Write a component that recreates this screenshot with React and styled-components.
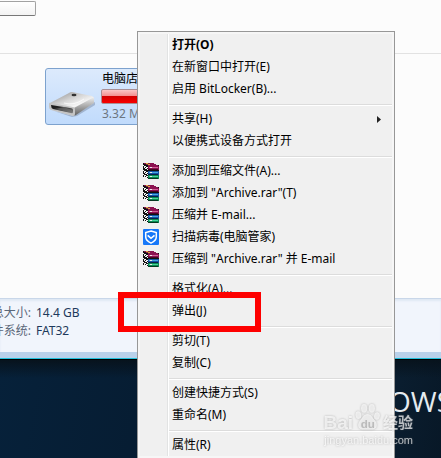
import React from 'react'
import styled, { createGlobalStyle } from 'styled-components'

const GlobalStyle = createGlobalStyle`
  * {
    box-sizing: border-box;
  }

  body {
    margin: 0;
    font-family: "Noto Sans", "Noto Sans CJK SC", sans-serif;
    font-size: 12px;
    color: #000;
  }
`;

const Screen = styled.div`
  position: relative;
  display: flex;
  flex-direction: column;
  min-height: 100vh;
  overflow: hidden;
  background: #fcfcfc;
`;

const Explorer = styled.main`
  border-bottom: 1px solid #22c0dc;
`;

const DriveGroup = styled.section`
  height: 54px;
  padding-top: 1px;
  border-bottom: 1px solid #e2e2e2;
`;

const EmptyBar = styled.div`
  width: 36px;
  height: 15px;
  border: 1px solid #a2a2a2;
  border-left: 0;
  border-bottom-color: #777;
  border-radius: 0 2px 2px 0;
  background: linear-gradient(#fff, #f3f3f3);
`;

const RemovableGroup = styled.section`
  padding: 14px 45px 173px;
`;

const DriveTile = styled.div`
  display: flex;
  align-items: center;
  width: 240px;
  height: 57px;
  padding: 0 4px 0 3px;
  gap: 5px;
  border: 1px solid #7da2ce;
  border-radius: 3px;
  background: linear-gradient(#dceafc, #c1dbfc);
`;

const DriveInfo = styled.div`
  flex: 1;
  display: flex;
  flex-direction: column;
`;

const DriveName = styled.span`
  line-height: 18px;
  padding-left: 1px;
`;

const UsageBar = styled.div`
  height: 15px;
  margin: 1px 0;
  border: 1px solid #aa8f94;
  border-radius: 2px;
  background: linear-gradient(#fbc6c6 0, #f38f8f 6px, #d00000 6px, #f80000 100%);
`;

const FreeSpace = styled.span`
  line-height: 18px;
  padding-left: 1px;
  color: #6d7580;
`;

const Details = styled.dl`
  margin: 0;
  padding: 5px 0 12px;
  border-top: 1px solid #c9d7e9;
  background: #f1f5fc;
  box-shadow: inset 0 2px 2px #dfe8f4;
`;

const DetailRow = styled.div`
  display: flex;
  gap: 5px;
  line-height: 18px;
`;

const DetailLabel = styled.dt`
  display: flex;
  justify-content: flex-end;
  width: 31px;
  overflow: hidden;
  white-space: nowrap;
  color: #5a6779;
`;

const DetailValue = styled.dd`
  margin: 0;
  color: #1e395b;
`;

const WindowEdge = styled.div`
  height: 6px;
  background: #b9d1ea;
`;

const Desktop = styled.footer`
  flex: 1;
  display: flex;
  justify-content: flex-end;
  overflow: hidden;
  border-top: 1px solid #000;
  background: linear-gradient(#07131d 0, transparent 18px),
    linear-gradient(100deg, #06213a 0, #061c31 40%, #0c2338 75%, #081827 100%);
`;

const Wallmark = styled.span`
  margin: 21px -11px 0 0;
  font-family: "Open Sans", sans-serif;
  font-size: 28px;
  line-height: 40px;
  color: #e6ebef;
`;

const ContextMenu = styled.div`
  position: absolute;
  top: 31px;
  left: 137px;
  width: 258px;
  padding: 2px;
  border: 1px solid #979797;
  background: linear-gradient(90deg, transparent 27px, #e2e3e3 27px, #e2e3e3 28px, #fff 28px, #fff 29px, transparent 29px) content-box,
    linear-gradient(#f0f0f0, #f0f0f0) content-box,
    #f6f6f6;
`;

const MenuItem = styled.button`
  position: relative;
  z-index: ${props => props.$raised ? 1 : 0};
  display: flex;
  align-items: center;
  width: 100%;
  height: 22px;
  padding: 0 11px 0 3px;
  border: 0;
  background: none;
  font: inherit;
  font-weight: ${props => props.$bold ? 700 : 400};
  color: #000;
  text-align: left;
  white-space: nowrap;
`;

const IconSlot = styled.span`
  display: flex;
  width: 16px;
  margin-right: 13px;
`;

const ItemLabel = styled.span`
  flex: 1;
  padding-bottom: 2px;
`;

const Separator = styled.div`
  height: 2px;
  margin: 4px 0 2px 29px;
  border-top: 1px solid #dcdcdc;
  border-bottom: 1px solid #fff;
`;

const Highlight = styled.span`
  position: absolute;
  top: -8px;
  left: -22px;
  width: 143px;
  height: 40px;
  border: 6px solid #fe0000;
  pointer-events: none;
`;

const Watermark = styled.div`
  position: absolute;
  right: 28px;
  bottom: 11px;
  z-index: 2;
  display: flex;
  flex-direction: column;
  align-items: flex-end;
  color: rgba(255, 255, 255, 0.7);
  filter: drop-shadow(0 0 1px rgba(90, 90, 90, 0.55));
  pointer-events: none;
`;

const WatermarkLogo = styled.div`
  display: flex;
  align-items: flex-end;
  font-family: "Liberation Sans", "Noto Sans CJK SC", sans-serif;
  font-size: 19px;
  font-weight: 700;
  line-height: 20px;
`;

const Paw = styled.svg`
  margin: 0 1px 3px 2px;
`;

const WatermarkChinese = styled.span`
  margin-left: 2px;
  font-size: 15px;
`;

const WatermarkSite = styled.span`
  font-family: "Liberation Sans", sans-serif;
  font-size: 11px;
  line-height: 14px;
`;

const menu = [
    [
        { label: '打开(O)', bold: true },
        { label: '在新窗口中打开(E)' },
        { label: '启用 BitLocker(B)...' },
    ],
    [
        { label: '共享(H)', submenu: true },
        { label: '以便携式设备方式打开' },
    ],
    [
        { label: '添加到压缩文件(A)...', icon: 'rar' },
        { label: '添加到 "Archive.rar"(T)', icon: 'rar' },
        { label: '压缩并 E-mail...', icon: 'rar' },
        { label: '扫描病毒(电脑管家)', icon: 'shield' },
        { label: '压缩到 "Archive.rar" 并 E-mail', icon: 'rar' },
    ],
    [
        { label: '格式化(A)...' },
        { label: '弹出(J)', highlight: true },
    ],
    [
        { label: '剪切(T)' },
        { label: '复制(C)' },
    ],
    [
        { label: '创建快捷方式(S)' },
        { label: '重命名(M)' },
    ],
    [
        { label: '属性(R)' },
    ],
]

function Spine({ y, cover, light, dark }) {
    return (
        <g transform={`translate(0 ${y})`}>
            {/* page block on the left, stepping down to the spine */}
            <path d="M0 -2h1v1h2v1h2v4H4V3H2V2H0z" fill="#111" />
            <path d="M0 -1h1v1h2v1h2v1H3V1H1V0H0zM1 1h1v1h2v1h1v1H4V3H2V2H1z" fill="#f4f4f4" />
            <path d="M5 0h11v4H5z" fill={cover} />
            <path d="M6 1h9v1H6z" fill={light} />
            <path d="M5 3h10v1H5z" fill={dark} />
            <path d="M7 1h2v1H7z" fill="#e8e8e8" />
        </g>
    )
}

function RarIcon() {
    return (
        <svg width="16" height="16" viewBox="0 0 16 16" shapeRendering="crispEdges">
            <path d="M0 0h11v1h2v1h3v14H5v-1H3v-1H1v-1H0z" fill="#111" />
            <Spine y={12} cover="#0b8a52" light="#45d69c" dark="#033820" />
            <Spine y={8} cover="#1555a4" light="#45a9e4" dark="#06234c" />
            <Spine y={3} cover="#8b1150" light="#d45e98" dark="#420522" />
            <path d="M1 0h10v1h2v1h2v1H5V2H3V1H1z" fill="#8b1150" />
            <path d="M3 0h2v1h2v1H5V1H3z" fill="#d8bd35" />
        </svg>
    )
}

function ShieldIcon() {
    return (
        <svg width="16" height="16" viewBox="0 0 16 16">
            <rect width="16" height="16" rx="1" fill="#1677f8" />
            <path d="M8 2 13.3 3.6v4.2c0 2.8-2.2 4.9-5.3 6.3-3.1-1.4-5.3-3.5-5.3-6.3V3.6z" fill="none" stroke="#fff" strokeWidth="1.5" />
            <path d="m4.7 6.3 3.3 3 3.5-3" fill="none" stroke="#fff" strokeWidth="1.6" />
        </svg>
    )
}

function DriveIcon() {
    return (
        <svg width="47" height="41" viewBox="3 -12 47 41">
            <defs>
                <linearGradient id="driveTop" x1="0" y1="0" x2="1" y2="1">
                    <stop offset="0" stopColor="#858585" />
                    <stop offset=".45" stopColor="#d5d5d5" />
                    <stop offset=".7" stopColor="#f6f6f6" />
                    <stop offset="1" stopColor="#aaa" />
                </linearGradient>
                <linearGradient id="driveSide" x1="0" y1="0" x2="0" y2="1">
                    <stop offset="0" stopColor="#f0f0f0" />
                    <stop offset="1" stopColor="#626262" />
                </linearGradient>
                <linearGradient id="driveSlot" x1="0" y1="0" x2="1" y2="1">
                    <stop offset="0" stopColor="#111" />
                    <stop offset=".5" stopColor="#333" />
                    <stop offset="1" stopColor="#888" />
                </linearGradient>
            </defs>
            <path d="M8 23 28 28l21-14v3L31 28l-5 1z" fill="#7b8ca5" opacity=".5" />
            <path d="M4 15 23 5q1-1 3-1l20 4q2 1 1 2L28 21z" fill="url(#driveTop)" />
            <path d="M28 20 48 9v6L30 27q-2 1-3 0z" fill="url(#driveSide)" />
            <path d="M3 16q0-2 2-1l22 4q2 0 2 2v5q0 2-2 2L5 22q-2-1-2-3z" fill="#c4c4c4" />
            <path d="m5 17 19 3q3 0 3 2v2q0 2-2 1L7 21q-2-1-2-4z" fill="url(#driveSlot)" />
            <path d="m9 21 9-2 8 3v3z" fill="#777" opacity=".6" />
            <path d="M18 15q10 3 20-4" fill="none" stroke="#fff" opacity=".7" />
            <ellipse cx="28" cy="7" rx="2.5" ry="1.2" fill="#333" />
        </svg>
    )
}

function SubmenuArrow() {
    return (
        <svg width="4" height="7" viewBox="0 0 4 7">
            <path d="M0 0v7l4-3.5z" fill="#222" />
        </svg>
    )
}

function PawIcon() {
    return (
        <Paw width="25" height="27" viewBox="0 0 26 27">
            <g fill="currentColor">
                <ellipse cx="3.5" cy="12" rx="3" ry="4" transform="rotate(-12 3.5 12)" />
                <ellipse cx="9.5" cy="5" rx="3.2" ry="4.6" />
                <ellipse cx="17.5" cy="5" rx="3.2" ry="4.6" />
                <ellipse cx="22.8" cy="13" rx="3" ry="4" transform="rotate(12 22.8 13)" />
                <path d="M13 11c4 0 5 4 8 7 3 4 2 9-3 9H8c-5 0-6-5-3-9 3-3 4-7 8-7z" />
            </g>
            <text x="6" y="25" fontFamily="Liberation Sans" fontSize="12" fontWeight="700" fill="#bbb">du</text>
        </Paw>
    )
}

function App() {
    return (
        <Screen>
            <GlobalStyle />

            <Explorer>
                <DriveGroup>
                    <EmptyBar />
                </DriveGroup>
                <RemovableGroup>
                    <DriveTile>
                        <DriveIcon />
                        <DriveInfo>
                            <DriveName>电脑店</DriveName>
                            <UsageBar />
                            <FreeSpace>3.32 MB</FreeSpace>
                        </DriveInfo>
                    </DriveTile>
                </RemovableGroup>
                <Details>
                    <DetailRow>
                        <DetailLabel>总大小:</DetailLabel>
                        <DetailValue>14.4 GB</DetailValue>
                    </DetailRow>
                    <DetailRow>
                        <DetailLabel>文件系统:</DetailLabel>
                        <DetailValue>FAT32</DetailValue>
                    </DetailRow>
                </Details>
                <WindowEdge />
            </Explorer>

            <Desktop>
                <Wallmark>OWS</Wallmark>
            </Desktop>

            <ContextMenu role="menu">
                {menu.map((group, index) => (
                    <React.Fragment key={index}>
                        {index > 0 && <Separator role="separator" />}
                        {group.map(item => (
                            <MenuItem key={item.label} type="button" role="menuitem" $bold={item.bold} $raised={item.highlight}>
                                <IconSlot>
                                    {item.icon === 'rar' && <RarIcon />}
                                    {item.icon === 'shield' && <ShieldIcon />}
                                </IconSlot>
                                <ItemLabel>{item.label}</ItemLabel>
                                {item.submenu && <SubmenuArrow />}
                                {item.highlight && <Highlight />}
                            </MenuItem>
                        ))}
                    </React.Fragment>
                ))}
            </ContextMenu>

            {/* Watermark */}
            <Watermark>
                <WatermarkLogo>
                    <span>Bai</span>
                    <PawIcon />
                    <WatermarkChinese>经验</WatermarkChinese>
                </WatermarkLogo>
                <WatermarkSite>jingyan.baidu.com</WatermarkSite>
            </Watermark>
        </Screen>
    )
}

export default App
